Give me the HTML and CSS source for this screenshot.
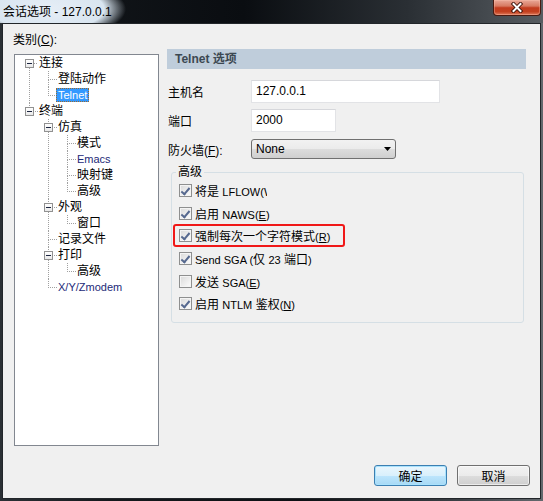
FILE: index.html
```html
<!DOCTYPE html>
<html lang="zh-CN">
<head>
    <meta charset="UTF-8">
    <meta name="viewport" content="width=device-width, initial-scale=1.0">
    <title>会话选项 - 127.0.0.1</title>
    <link rel="stylesheet" href="styles.css">
</head>
<body>
    <div class="window">
        <div class="titlebar">
            <span class="title">会话选项 - 127.0.0.1</span>
            <button class="close-btn" type="button" aria-label="关闭">
                <svg width="14" height="11" viewBox="0 0 14 11">
                    <path d="M3.5 2 L10.5 9 M10.5 2 L3.5 9" stroke="#3b1008" stroke-width="3.8" stroke-linecap="square" fill="none"/>
                    <path d="M3.5 2 L10.5 9 M10.5 2 L3.5 9" stroke="#ffffff" stroke-width="2" stroke-linecap="square" fill="none"/>
                </svg>
            </button>
        </div>

        <div class="client">
            <div class="main">
                <!-- Category tree -->
                <div class="category">
                    <div class="cat-label">类别(<u>C</u>):</div>
                    <div class="tree-box">
                        <ul class="tree">
                            <li>
                                <div class="node"><span class="toggle"></span><span class="text">连接</span></div>
                                <ul>
                                    <li><div class="node"><span class="text">登陆动作</span></div></li>
                                    <li><div class="node"><span class="text en selected">Telnet</span></div></li>
                                </ul>
                            </li>
                            <li>
                                <div class="node"><span class="toggle"></span><span class="text">终端</span></div>
                                <ul>
                                    <li>
                                        <div class="node"><span class="toggle"></span><span class="text">仿真</span></div>
                                        <ul>
                                            <li><div class="node"><span class="text">模式</span></div></li>
                                            <li><div class="node"><span class="text en latin">Emacs</span></div></li>
                                            <li><div class="node"><span class="text">映射键</span></div></li>
                                            <li><div class="node"><span class="text">高级</span></div></li>
                                        </ul>
                                    </li>
                                    <li>
                                        <div class="node"><span class="toggle"></span><span class="text">外观</span></div>
                                        <ul>
                                            <li><div class="node"><span class="text">窗口</span></div></li>
                                        </ul>
                                    </li>
                                    <li><div class="node"><span class="text">记录文件</span></div></li>
                                    <li>
                                        <div class="node"><span class="toggle"></span><span class="text">打印</span></div>
                                        <ul>
                                            <li><div class="node"><span class="text">高级</span></div></li>
                                        </ul>
                                    </li>
                                    <li><div class="node"><span class="text en latin">X/Y/Zmodem</span></div></li>
                                </ul>
                            </li>
                        </ul>
                    </div>
                </div>

                <!-- Telnet page -->
                <div class="panel">
                    <div class="panel-header">Telnet 选项</div>

                    <div class="form">
                        <label class="form-label">主机名</label>
                        <div class="textbox wide">127.0.0.1</div>

                        <label class="form-label">端口</label>
                        <div class="textbox short">2000</div>

                        <label class="form-label">防火墙(<u>F</u>):</label>
                        <div class="combo">
                            <span>None</span>
                            <svg width="7" height="4" viewBox="0 0 7 4"><polygon points="0,0 7,0 3.5,4" fill="#000"/></svg>
                        </div>
                    </div>

                    <fieldset class="group">
                        <legend>高级</legend>
                        <div class="check-row">
                            <span class="checkbox checked"></span>
                            <span class="check-text clipped">将是 <span class="en">LFLOW(W)</span></span>
                        </div>
                        <div class="check-row">
                            <span class="checkbox checked"></span>
                            <span class="check-text">启用 <span class="en">NAWS(<u>E</u>)</span></span>
                        </div>
                        <div class="check-row marked">
                            <span class="checkbox checked"></span>
                            <span class="check-text">强制每次一个字符模式<span class="en">(<u>R</u>)</span></span>
                        </div>
                        <div class="check-row">
                            <span class="checkbox checked"></span>
                            <span class="check-text"><span class="en">Send SGA (</span>仅 <span class="en">23</span> 端口<span class="en">)</span></span>
                        </div>
                        <div class="check-row">
                            <span class="checkbox"></span>
                            <span class="check-text">发送 <span class="en">SGA(<u>E</u>)</span></span>
                        </div>
                        <div class="check-row">
                            <span class="checkbox checked"></span>
                            <span class="check-text">启用 <span class="en">NTLM</span> 鉴权<span class="en">(<u>N</u>)</span></span>
                        </div>
                    </fieldset>
                </div>
            </div>

            <div class="footer">
                <button class="btn default" type="button">确定</button>
                <button class="btn" type="button">取消</button>
            </div>
        </div>
    </div>
</body>
</html>
```

FILE: styles.css
```css
* {
    margin: 0;
    padding: 0;
    box-sizing: border-box;
}

body {
    font-family: "Liberation Sans", "Noto Sans CJK SC", sans-serif;
    font-size: 12px;
    color: #000;
    background: #1b1f24;
}

u {
    text-decoration: underline;
    text-underline-offset: 1px;
}

/* latin runs are set a bit smaller, like the dialog font */
.en {
    font-size: 11px;
}

.window {
    width: 543px;
    height: 501px;
    display: flex;
    flex-direction: column;
    background: linear-gradient(to right, #2b3035 0, #15191d 20%, #0d1014 55%, #3c4146 85%, #63686d 100%);
}

/* Title bar */
.titlebar {
    height: 23px;
    flex: none;
    display: flex;
    align-items: flex-start;
    background:
        radial-gradient(ellipse 78px 30px at 48px 9px, #e6eef6 0, #d9e5f0 72%, rgba(217, 229, 240, 0) 100%),
        linear-gradient(to right, #14181c 0, #0a0d11 45%, #2a2f34 75%, #575c61 100%);
}

.title {
    padding: 5px 0 0 3px;
    line-height: 14px;
    font-size: 12px;
    white-space: nowrap;
}

.close-btn {
    margin-left: auto;
    margin-right: 2px;
    width: 48px;
    height: 16px;
    border: 1px solid #4a1a10;
    border-top: none;
    border-radius: 0 0 4px 4px;
    background: linear-gradient(#e9a898 0, #d77a62 40%, #c23c1f 52%, #c3401f 78%, #de7a5c 100%);
    box-shadow: inset 0 0 0 1px rgba(255, 200, 180, 0.35);
    display: flex;
    align-items: center;
    justify-content: center;
}

/* Dialog body */
.client {
    flex: 1;
    margin: 0 2px 2px 2px;
    border: 1px solid #22262a;
    background: #f0f0f0;
    display: flex;
    flex-direction: column;
    padding: 8px 10px 12px 11px;
}

.main {
    display: grid;
    grid-template-columns: 145px 359px;
    column-gap: 8px;
}

.cat-label {
    line-height: 16px;
    margin-left: -1px;
}

.tree-box {
    margin-top: 6px;
    height: 392px;
    background: #fff;
    border: 1px solid #828790;
}

/* Tree view */
.tree,
.tree ul {
    list-style: none;
}

.tree ul {
    margin-left: 19px;
}

.tree li {
    position: relative;
}

.tree li::before {
    content: '';
    position: absolute;
    left: 14px;
    top: 0;
    width: 8px;
    height: 8px;
    border-left: 1px dotted #a0a0a0;
    border-bottom: 1px dotted #a0a0a0;
}

.tree > li:first-child::before {
    border-left: none;
}

.tree li:not(:last-child)::after {
    content: '';
    position: absolute;
    left: 14px;
    top: 8px;
    bottom: 0;
    border-left: 1px dotted #a0a0a0;
}

.node {
    position: relative;
    height: 16px;
    display: flex;
    align-items: center;
    padding-left: 22px;
}

.toggle {
    position: absolute;
    left: 10px;
    top: 4px;
    width: 9px;
    height: 9px;
    border: 1px solid #919191;
    background: linear-gradient(#ffffff, #e9e9e9);
    z-index: 1;
}

.toggle::after {
    content: '';
    position: absolute;
    left: 1px;
    top: 3px;
    width: 5px;
    height: 1px;
    background: #1c2540;
}

.text {
    line-height: 12px;
    padding: 0 1px;
    border: 1px solid transparent;
    white-space: nowrap;
}

.text.latin {
    color: #1d2a78;
}

.text.selected {
    background: #3399ff;
    color: #fff;
    border: 1px dotted #9a6a30;
}

/* Right page */
.panel {
    padding-top: 17px;
}

.panel-header {
    height: 20px;
    line-height: 20px;
    padding-left: 8px;
    background: #bfcddb;
    color: #3c4852;
    font-weight: bold;
}

.form {
    margin-top: 11px;
    display: grid;
    grid-template-columns: 84px 1fr;
    grid-auto-rows: 23px;
    row-gap: 6px;
    align-items: center;
}

.form-label {
    padding-left: 1px;
}

.textbox {
    height: 23px;
    line-height: 21px;
    padding-left: 4px;
    background: #fff;
    border: 1px solid #e2e3e6;
    border-top-color: #d6d7db;
}

.textbox.wide {
    width: 189px;
}

.textbox.short {
    width: 85px;
}

.combo {
    width: 145px;
    height: 20px;
    margin-top: 1px;
    align-self: start;
    display: flex;
    align-items: center;
    justify-content: space-between;
    padding: 0 4px 0 4px;
    border: 1px solid #707070;
    border-radius: 3px;
    background: linear-gradient(#f2f2f2 0, #ebebeb 50%, #dddddd 50%, #cfcfcf 100%);
}

.group {
    margin: 4px 2px 0 4px;
    padding: 0 0 7px 0;
    border: 1px solid #d5dfe5;
    border-radius: 3px;
}

.group legend {
    margin-left: 4px;
    padding: 0 2px;
    line-height: 14px;
}

.check-row {
    height: 22.7px;
    display: flex;
    align-items: center;
    padding-left: 7px;
}

.check-row.marked {
    width: 172px;
    margin-left: 1px;
    padding-left: 4px;
    border: 2px solid #f01818;
    border-radius: 3px;
}

.checkbox {
    flex: none;
    width: 13px;
    height: 13px;
    margin-right: 3px;
    border: 1px solid #8e8f8f;
    background: linear-gradient(135deg, #d9d9d9 0, #f6f6f6 80%);
    box-shadow: inset 0 0 0 1px #f4f4f4;
    position: relative;
}

.checkbox.checked::after {
    content: '';
    position: absolute;
    left: 3px;
    top: 1px;
    width: 3px;
    height: 7px;
    border-right: 2px solid #56698f;
    border-bottom: 2px solid #56698f;
    transform: rotate(40deg);
}

.check-text {
    white-space: nowrap;
}

.check-text.clipped {
    display: inline-block;
    max-width: 72px;
    overflow: hidden;
    vertical-align: middle;
}

/* Dialog buttons */
.footer {
    margin-top: 19px;
    display: flex;
    justify-content: flex-end;
    gap: 10px;
}

.btn {
    width: 73px;
    height: 21px;
    font: inherit;
    color: #000;
    border: 1px solid #707070;
    border-radius: 3px;
    background: linear-gradient(#f2f2f2 0, #ebebeb 50%, #dddddd 50%, #cfcfcf 100%);
    box-shadow: inset 0 0 0 1px rgba(255, 255, 255, 0.6);
}

.btn.default {
    border-color: #3c7fb1;
    background: linear-gradient(#eaf6fd 0, #d9f0fc 50%, #bee6fd 50%, #a7d9f5 100%);
    box-shadow: inset 0 0 0 1px #a9e2fd;
}
```
